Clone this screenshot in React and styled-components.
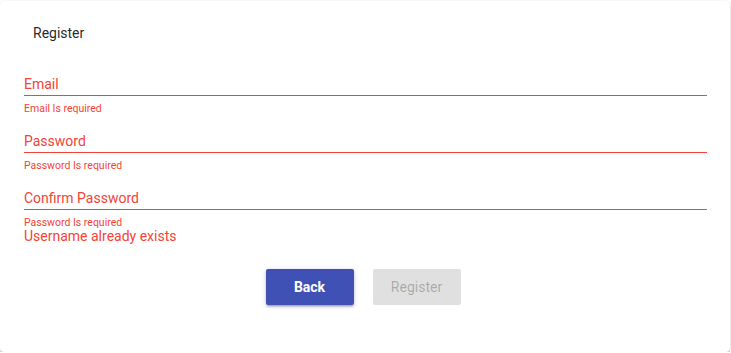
import React from "react";
import styled, { createGlobalStyle } from "styled-components";

const Global = createGlobalStyle`
  html, body { margin: 0; padding: 0; background: #fff; }
  body { font-family: Roboto, "Liberation Sans", Arial, sans-serif; }
  * { box-sizing: border-box; }
`;

const Card = styled.div`
  width: 730px;
  height: 351px;
  margin-top: 1px;
  background: #fff;
  border-radius: 4px;
  box-shadow: 0 1px 3px 0 rgba(0,0,0,0.2), 0 1px 1px 0 rgba(0,0,0,0.14), 0 2px 1px -1px rgba(0,0,0,0.12);
  padding: 0 23px 0 24px;
  display: flex;
  flex-direction: column;
`;

const Title = styled.div`
  font-size: 14px;
  line-height: 16px;
  color: rgba(0,0,0,0.87);
  padding: 24px 0 0 9px;
  height: 63px;
  flex-shrink: 0;
`;

const Fields = styled.div`
  display: flex;
  flex-direction: column;
  gap: 6px;
`;

const Field = styled.div`
  display: flex;
  flex-direction: column;
`;

const InputBox = styled.div`
  height: 32px;
  display: flex;
  align-items: flex-end;
  padding-bottom: 3px;
  border-bottom: 1px solid #f44336;
  font-size: 14px;
  line-height: 16px;
  color: #f44336;
`;

const Helper = styled.div`
  margin-top: 7px;
  font-size: 10.5px;
  line-height: 12px;
  color: #f44336;
`;

const ErrorText = styled.div`
  font-size: 14px;
  line-height: 16px;
  margin-top: -1px;
  color: #f44336;
`;

const Actions = styled.div`
  display: flex;
  justify-content: center;
  gap: 19px;
  margin-top: 25px;
  padding-right: 5px;
`;

const Button = styled.button`
  width: 88px;
  height: 36px;
  border: none;
  border-radius: 2px;
  font-family: Roboto, "Liberation Sans", Arial, sans-serif;
  font-size: 14px;
  font-weight: ${p => (p.$primary ? 700 : 400)};
  background: ${p => (p.$primary ? "#3f51b5" : "#e0e0e0")};
  color: ${p => (p.$primary ? "#fff" : "rgba(0,0,0,0.26)")};
  box-shadow: ${p =>
    p.$primary
      ? "0 1px 5px 0 rgba(0,0,0,0.2), 0 2px 2px 0 rgba(0,0,0,0.14), 0 3px 1px -2px rgba(0,0,0,0.12)"
      : "none"};
  cursor: ${p => (p.disabled ? "default" : "pointer")};
`;

const fields = [
  { label: "Email", helper: "Email Is required" },
  { label: "Password", helper: "Password Is required" },
  { label: "Confirm Password", helper: "Password Is required" },
];

export default function App() {
  return (
    <>
      <Global />
      <Card>
        <Title>Register</Title>
        <Fields>
          {fields.map(f => (
            <Field key={f.label}>
              <InputBox>{f.label}</InputBox>
              <Helper>{f.helper}</Helper>
            </Field>
          ))}
        </Fields>
        <ErrorText>Username already exists</ErrorText>
        <Actions>
          <Button $primary>Back</Button>
          <Button disabled>Register</Button>
        </Actions>
      </Card>
    </>
  );
}
